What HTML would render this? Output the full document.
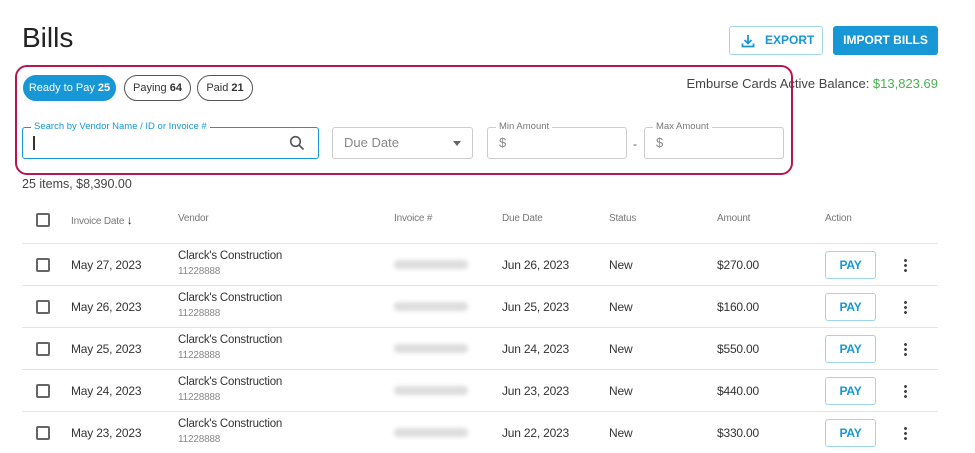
<!DOCTYPE html><html><head><style>
*{margin:0;padding:0;box-sizing:border-box}
body{width:975px;height:440px;overflow:hidden;background:#fff;font-family:"Liberation Sans",sans-serif;color:#333;position:relative}
.a{position:absolute}
.chip{position:absolute;top:75px;height:26px;border-radius:13px;font-size:11px;line-height:24px;text-align:center;border:1px solid #555;color:#333}
.fld{position:absolute;top:127px;height:32px;border:1px solid #ccc;border-radius:3px}
.lab{position:absolute;top:-7px;left:8px;background:#fff;padding:0 3px;font-size:9.5px;color:#777;line-height:12px}
.hd{position:absolute;top:213px;font-size:10px;color:#777;letter-spacing:-0.2px}
.row{position:absolute;left:22px;width:916px;height:42px;border-top:1px solid #e4e4e4;letter-spacing:-0.2px}
.row div{position:absolute}
.cb{left:14px;top:14px;width:14px;height:14px;border:2px solid #666;border-radius:2px}
.t{top:14px;font-size:12px;color:#333}
.pay{left:803px;top:7px;width:51px;height:28px;border:1px solid #9fd4ef;border-radius:3px;color:#1797d6;font-size:12px;font-weight:bold;text-align:center;line-height:26px}
.dots{left:882px;top:14px;width:3px;height:14px;background:radial-gradient(circle,#444 1.3px,transparent 1.6px) 0 0/3px 5px repeat-y}
.blur{left:372px;top:16px;width:74px;height:9px;background:#ddd;border-radius:4px;filter:blur(2px)}
</style></head><body>
<div class="a" style="left:22px;top:22px;font-size:28px;color:#222">Bills</div>
<div class="a" style="left:729px;top:26px;width:94px;height:29px;border:1px solid #9fd4ef;border-radius:3px;color:#1797d6;font-size:12px;font-weight:bold;line-height:27px;padding-left:35px">EXPORT
<svg class="a" style="left:11px;top:7px" width="14" height="14" viewBox="0 0 14 14" fill="none" stroke="#1797d6" stroke-width="1.8"><path d="M7 1v8M3.5 6l3.5 3.5L10.5 6M1.5 9.5v3h11v-3"/></svg></div>
<div class="a" style="left:833px;top:26px;width:105px;height:29px;background:#1797d6;border-radius:3px;color:#fff;font-size:12px;font-weight:bold;line-height:29px;text-align:center">IMPORT BILLS</div>
<div class="a" style="left:15px;top:65px;width:778px;height:110px;border:2.5px solid #b8174e;border-radius:12px"></div>
<div class="chip" style="left:23px;width:93px;background:#1797d6;border-color:#1797d6;color:#fff">Ready to Pay <b>25</b></div>
<div class="chip" style="left:124px;width:67px">Paying <b>64</b></div>
<div class="chip" style="left:197px;width:56px">Paid <b>21</b></div>
<div class="a" style="right:37px;top:76px;font-size:13px;color:#444">Emburse Cards Active Balance: <span style="color:#4caf50">$13,823.69</span></div>
<div class="fld" style="left:22px;width:297px;border:1.5px solid #1797d6"><div class="lab" style="color:#1797d6">Search by Vendor Name / ID or Invoice #</div>
<div class="a" style="left:10px;top:8px;width:1.5px;height:14px;background:#333"></div>
<svg class="a" style="left:266px;top:7px" width="16" height="16" viewBox="0 0 16 16" fill="none" stroke="#555" stroke-width="1.6"><circle cx="6.5" cy="6.5" r="4.8"/><path d="M10 10l4.5 4.5"/></svg></div>
<div class="fld" style="left:332px;width:141px"><div class="a" style="left:11px;top:7px;font-size:13px;color:#888">Due Date</div><div class="a" style="left:120px;top:13px;border:4px solid transparent;border-top:5px solid #666"></div></div>
<div class="fld" style="left:487px;width:140px"><div class="lab">Min Amount</div><div class="a" style="left:11px;top:7px;font-size:13px;color:#888">$</div></div>
<div class="a" style="left:633px;top:137px;font-size:12px;color:#555">-</div>
<div class="fld" style="left:644px;width:140px"><div class="lab">Max Amount</div><div class="a" style="left:11px;top:7px;font-size:13px;color:#888">$</div></div>
<div class="a" style="left:22px;top:177px;font-size:12.5px;color:#444">25 items, $8,390.00</div>
<div class="a" style="left:36px;top:213px;width:14px;height:14px;border:2px solid #666;border-radius:2px"></div>
<div class="hd" style="left:71px">Invoice Date <span style="color:#222;font-size:12px">&#8595;</span></div>
<div class="hd" style="left:178px">Vendor</div><div class="hd" style="left:394px">Invoice #</div><div class="hd" style="left:502px">Due Date</div><div class="hd" style="left:609px">Status</div><div class="hd" style="left:717px">Amount</div><div class="hd" style="left:825px">Action</div>
<div class="row" style="top:243px"><div class="cb"></div><div class="t" style="left:49px">May 27, 2023</div><div style="left:156px;top:6px;font-size:11.5px">Clarck's Construction</div><div style="left:156px;top:22px;font-size:10px;color:#888">11228888</div><div class="blur"></div><div class="t" style="left:480px">Jun 26, 2023</div><div class="t" style="left:587px">New</div><div class="t" style="left:695px">$270.00</div><div class="pay">PAY</div><div class="dots"></div></div>
<div class="row" style="top:285px"><div class="cb"></div><div class="t" style="left:49px">May 26, 2023</div><div style="left:156px;top:6px;font-size:11.5px">Clarck's Construction</div><div style="left:156px;top:22px;font-size:10px;color:#888">11228888</div><div class="blur"></div><div class="t" style="left:480px">Jun 25, 2023</div><div class="t" style="left:587px">New</div><div class="t" style="left:695px">$160.00</div><div class="pay">PAY</div><div class="dots"></div></div>
<div class="row" style="top:327px"><div class="cb"></div><div class="t" style="left:49px">May 25, 2023</div><div style="left:156px;top:6px;font-size:11.5px">Clarck's Construction</div><div style="left:156px;top:22px;font-size:10px;color:#888">11228888</div><div class="blur"></div><div class="t" style="left:480px">Jun 24, 2023</div><div class="t" style="left:587px">New</div><div class="t" style="left:695px">$550.00</div><div class="pay">PAY</div><div class="dots"></div></div>
<div class="row" style="top:369px"><div class="cb"></div><div class="t" style="left:49px">May 24, 2023</div><div style="left:156px;top:6px;font-size:11.5px">Clarck's Construction</div><div style="left:156px;top:22px;font-size:10px;color:#888">11228888</div><div class="blur"></div><div class="t" style="left:480px">Jun 23, 2023</div><div class="t" style="left:587px">New</div><div class="t" style="left:695px">$440.00</div><div class="pay">PAY</div><div class="dots"></div></div>
<div class="row" style="top:411px"><div class="cb"></div><div class="t" style="left:49px">May 23, 2023</div><div style="left:156px;top:6px;font-size:11.5px">Clarck's Construction</div><div style="left:156px;top:22px;font-size:10px;color:#888">11228888</div><div class="blur"></div><div class="t" style="left:480px">Jun 22, 2023</div><div class="t" style="left:587px">New</div><div class="t" style="left:695px">$330.00</div><div class="pay">PAY</div><div class="dots"></div></div>
</body></html>
